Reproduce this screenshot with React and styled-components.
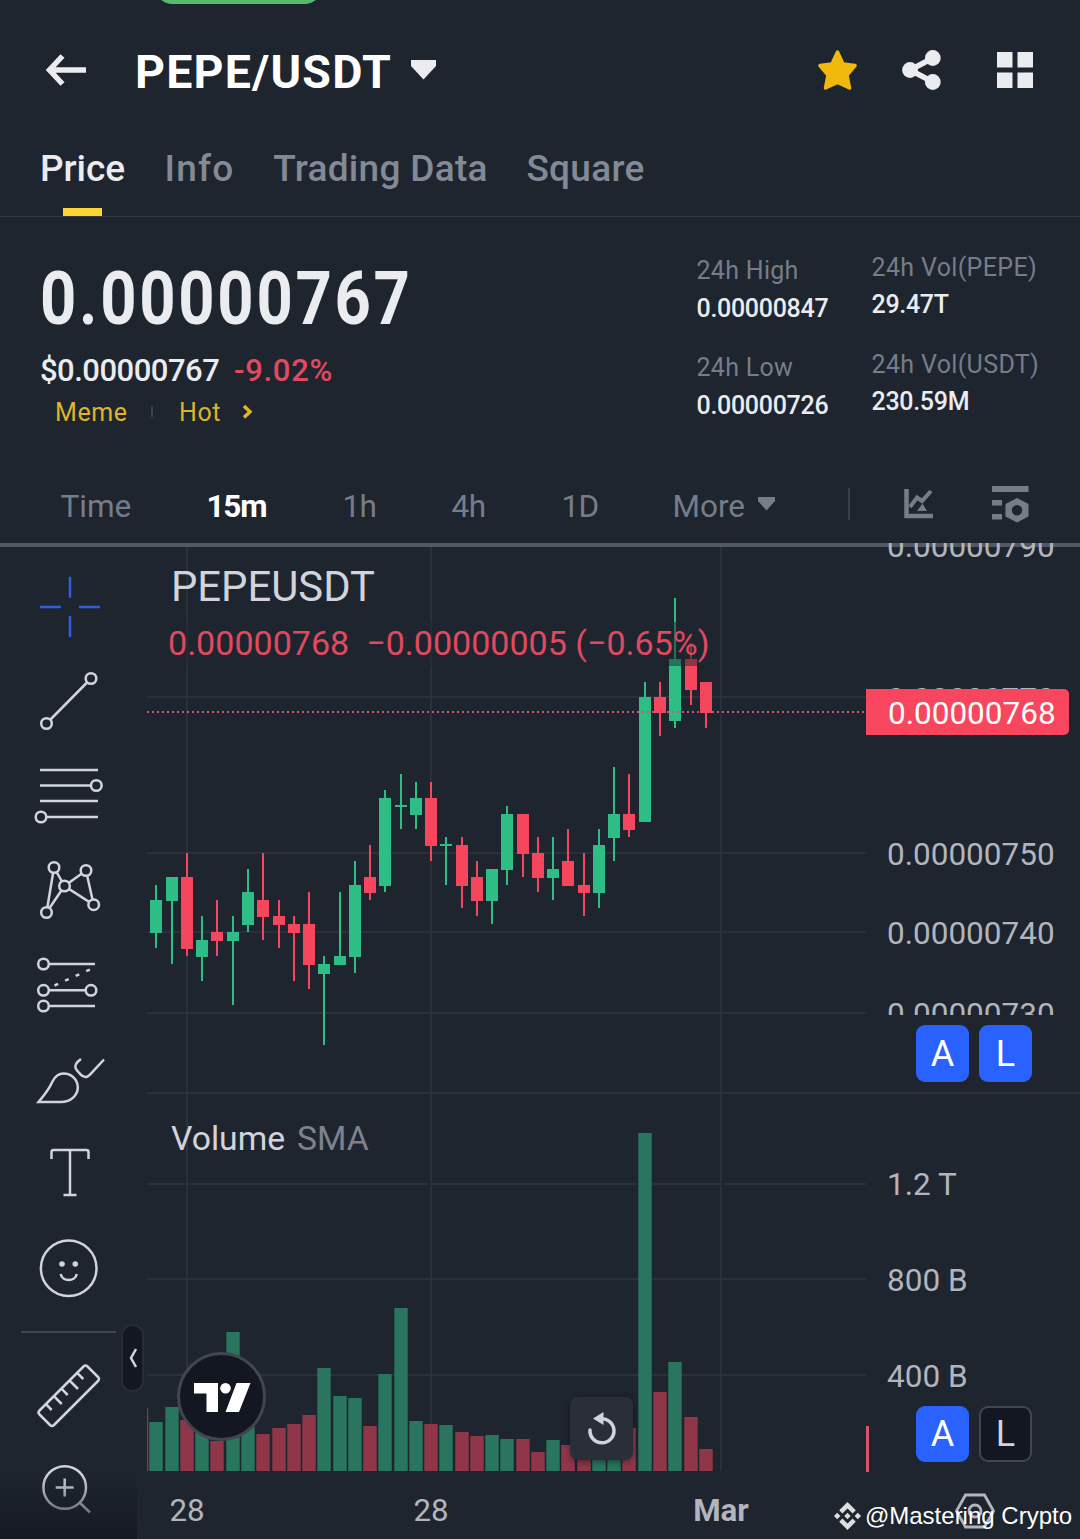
import React from 'react';
import styled, { createGlobalStyle } from 'styled-components';

const GlobalStyle = createGlobalStyle`
  * { box-sizing: border-box; }
  body {
    margin: 0;
    background: #1e252f;
    font-family: 'Roboto', 'Inter', sans-serif;
  }
  svg { display: block; flex: none; }
`;

const BG = '#1e252f';
const UP = '#2ebd85';
const DOWN = '#f6465d';

const Screen = styled.main`
  position: relative;
  width: 1080px;
  height: 1539px;
  overflow: hidden;
  background: ${BG};
  display: flex;
  flex-direction: column;
`;

// Bottom edge of the system call pill
const StatusPill = styled.div`
  position: absolute;
  top: -36px;
  left: 153px;
  width: 171px;
  height: 40px;
  border-radius: 20px;
  background: #57b96b;
`;

const Header = styled.header`
  height: 140px;
  padding: 0 47px 0 45px;
  display: flex;
  align-items: center;
`;

const Pair = styled.h1`
  margin: 3px 19px 0 48px;
  font-size: 46.5px;
  font-weight: 700;
  letter-spacing: ${({ $track }) => $track}px;
  line-height: 60px;
  color: #fff;
`;

const Actions = styled.div`
  margin-left: auto;
  display: flex;
  align-items: center;
`;

const Tabs = styled.nav`
  height: 77px;
  padding-left: 40.5px;
  display: flex;
  border-bottom: 1px solid #333843;
`;

const Tab = styled.div`
  width: ${({ $w }) => $w}px;
  margin-right: 40px;
  display: flex;
  flex-direction: column;
  align-items: center;
  justify-content: space-between;
  white-space: nowrap;
  font-size: 37px;
  font-weight: 500;
  line-height: 58px;
  letter-spacing: ${({ $track }) => $track}px;
  color: ${({ $active }) => ($active ? '#eaecef' : '#838a96')};
  &::after {
    content: '';
    width: 39px;
    height: 8px;
    background: ${({ $active }) => ($active ? '#fcd535' : 'transparent')};
  }
`;

const Ticker = styled.section`
  height: 243px;
  padding-left: 40px;
  display: flex;
`;

const PriceBlock = styled.div`
  width: 656.5px;
  padding-top: 43px;
`;

const LastPrice = styled.div`
  width: 500px;
  height: 76px;
  line-height: 76px;
  font-size: 75px;
  font-weight: 700;
  letter-spacing: 3.2px;
  color: #eaecef;
  transform: scaleX(0.845);
  transform-origin: left;
`;

const FiatRow = styled.div`
  margin-top: 15px;
  display: flex;
  gap: 14px;
  font-size: 31px;
  font-weight: 500;
  line-height: 40px;
  color: #eaecef;
`;

const Fiat = styled.span`
  width: 180px;
  letter-spacing: -0.5px;
`;

const Change = styled.span`
  color: #e0495f;
  letter-spacing: 0.7px;
`;

const TagRow = styled.div`
  margin-top: 3px;
  padding-left: 15px;
  display: flex;
  align-items: center;
  font-size: 25px;
  line-height: 38px;
  letter-spacing: 0.6px;
  color: #dfb32b;
`;

const Tag = styled.span`
  width: ${({ $w }) => $w}px;
`;

const TagRule = styled.span`
  width: 2px;
  height: 11px;
  margin: 0 26px 4px 24px;
  background: #3a404b;
`;

const StatColumn = styled.div`
  width: 175px;
  padding-top: ${({ $top }) => $top}px;
  display: flex;
  flex-direction: column;
  gap: 22px;
`;

const Stat = styled.div`
  display: flex;
  flex-direction: column;
  font-size: 25px;
  line-height: 37.5px;
  white-space: nowrap;
`;

const StatLabel = styled.span`
  color: #767d89;
  letter-spacing: ${({ $track }) => $track || 0}px;
`;

const StatValue = styled.span`
  font-weight: 500;
  color: #eaecef;
  letter-spacing: -0.3px;
`;

const Intervals = styled.div`
  height: 83px;
  padding: 7px 0 0 60.5px;
  display: grid;
  grid-template-columns: 146px 136px 109px 110px 111px 85px 90px 56px 88px 60px;
  align-items: center;
  font-size: 31.5px;
  line-height: 48px;
  color: #767d89;
`;

const Interval = styled.span`
  padding-top: 3px;
  font-weight: ${({ $active }) => ($active ? 700 : 400)};
  color: ${({ $active }) => ($active ? '#fff' : 'inherit')};
  letter-spacing: ${({ $track }) => $track || 0}px;
`;

const IntervalRule = styled.span`
  width: 2px;
  height: 32px;
  margin-bottom: 2px;
  background: #3a404b;
`;

const ChartArea = styled.section`
  position: relative;
  height: 996px;
  display: flex;
  box-shadow: inset 0 4px #525761;
`;

const Rail = styled.aside`
  position: relative;
  width: 147px;
  padding-top: 16.75px;
  &::after {
    content: '';
    position: absolute;
    left: 0;
    bottom: 0;
    width: 137px;
    height: 66px;
    background: linear-gradient(rgba(19, 23, 34, 0), rgba(19, 23, 34, 0.85));
  }
`;

const Tool = styled.div`
  height: 94.5px;
  padding-left: 30px;
  display: flex;
  align-items: center;
`;

const RailRule = styled.div`
  width: 95px;
  height: 2px;
  margin: 15px 0 16px 21px;
  background: #434651;
`;

const CollapseHandle = styled.button`
  position: absolute;
  left: 121px;
  top: 781px;
  width: 23px;
  height: 68px;
  padding: 0;
  display: flex;
  align-items: center;
  justify-content: center;
  border: 2px solid #272c37;
  border-radius: 11px;
  background: #131722;
`;

const Plot = styled.div`
  position: relative;
  width: 719px;
`;

const Legend = styled.div`
  position: absolute;
  left: 21px;
  top: 16px;
  display: flex;
  flex-direction: column;
  align-items: flex-start;
  white-space: nowrap;
`;

const LegendTitle = styled.div`
  margin-left: 3px;
  font-size: 41.8px;
  line-height: 56px;
  color: #d1d4dc;
`;

const LegendValues = styled.div`
  margin-top: 7px;
  height: 44px;
  display: flex;
  gap: 17px;
  font-size: 34.05px;
  line-height: 43px;
  color: #e0495f;
  background: rgba(30, 37, 47, 0.5);
`;

const VolumeLegend = styled.div`
  position: absolute;
  left: 24px;
  top: 576px;
  font-size: 33.7px;
  line-height: 40px;
  color: #d1d4dc;
  span {
    margin-left: 12px;
    color: #7e828d;
  }
`;

const TvBadge = styled.div`
  position: absolute;
  left: 30px;
  top: 809px;
  width: 89px;
  height: 89px;
  padding: 2px 0 0 2px;
  display: flex;
  align-items: center;
  justify-content: center;
  border: 3px solid #434651;
  border-radius: 50%;
  background: #131722;
`;

const ResetButton = styled.button`
  position: absolute;
  left: 423px;
  top: 854px;
  width: 63px;
  height: 63px;
  padding: 0;
  display: flex;
  align-items: center;
  justify-content: center;
  border: 0;
  border-radius: 8px;
  background: #2a2e39;
  box-shadow: 0 2px 6px rgba(0, 0, 0, 0.4);
`;

const Axis = styled.div`
  position: relative;
  width: 214px;
  display: flex;
  flex-direction: column;
`;

const ScaleButtons = styled.div`
  height: ${({ $h }) => $h}px;
  margin: ${({ $top }) => $top}px 0 0 50px;
  display: flex;
  gap: 10px;
`;

const ScaleButton = styled.button`
  width: 53px;
  padding: 0;
  border: ${({ $on }) => ($on ? '0' : '2px solid #434651')};
  border-radius: 9px;
  background: ${({ $on }) => ($on ? '#2962ff' : '#131722')};
  color: ${({ $on }) => ($on ? '#fff' : '#d1d4dc')};
  font-family: 'Roboto', sans-serif;
  font-size: 36px;
`;

const PriceTag = styled.div`
  position: absolute;
  left: 0;
  top: 146px;
  width: 203px;
  height: 46px;
  padding-left: 22px;
  border-radius: 0 5px 5px 0;
  background: #f7465d;
  color: #fff;
  font-size: 31.5px;
  line-height: 49px;
`;

const VolumeMark = styled.div`
  position: absolute;
  left: 0;
  top: 883px;
  width: 3px;
  height: 46px;
  background: #d9536a;
`;

const AxisSettings = styled.div`
  margin: 31px 0 0 89px;
`;

const Watermark = styled.div`
  position: absolute;
  right: 8px;
  bottom: 8px;
  display: flex;
  align-items: center;
  gap: 4px;
  font-family: 'Liberation Sans', Arial, sans-serif;
  font-size: 24px;
  line-height: 30px;
  color: #fff;
`;

const TimeLabel = styled.text`
  font-size: 31.3px;
  font-weight: ${({ $bold }) => ($bold ? 700 : 400)};
  fill: #b2b5be;
  text-anchor: middle;
`;

const AxisLabel = styled.text`
  font-size: 31.5px;
  fill: #b2b5be;
`;

// [body top, body bottom, high, low, volume top, rising]
const bars = [
  [900, 933, 885, 948, 1422, 1],
  [877, 901, 877, 964, 1407, 1],
  [877, 949, 853, 956, 1420, 0],
  [940, 957, 916, 981, 1430, 1],
  [932, 941, 900, 956, 1441, 0],
  [932, 941, 916, 1005, 1332, 1],
  [892, 925, 869, 932, 1427, 1],
  [900, 917, 853, 940, 1434, 0],
  [916, 925, 900, 948, 1428, 0],
  [924, 933, 916, 981, 1424, 0],
  [924, 965, 892, 989, 1415, 0],
  [964, 974, 956, 1045, 1368, 1],
  [956, 965, 892, 965, 1396, 1],
  [885, 957, 861, 973, 1398, 1],
  [877, 893, 845, 900, 1426, 0],
  [798, 886, 790, 892, 1374, 1],
  [805, 807, 774, 829, 1308, 1],
  [798, 815, 782, 829, 1421, 1],
  [798, 846, 782, 861, 1424, 0],
  [844, 846, 837, 885, 1425, 1],
  [845, 886, 837, 908, 1432, 0],
  [877, 901, 861, 916, 1436, 0],
  [869, 901, 869, 924, 1435, 1],
  [814, 870, 806, 885, 1439, 1],
  [814, 854, 814, 877, 1439, 0],
  [853, 878, 837, 892, 1452, 0],
  [869, 878, 837, 900, 1440, 1],
  [861, 886, 829, 886, 1445, 0],
  [885, 893, 853, 916, 1445, 0],
  [845, 893, 829, 908, 1442, 1],
  [814, 838, 767, 861, 1442, 1],
  [814, 830, 774, 837, 1428, 0],
  [697, 822, 682, 822, 1133, 1],
  [697, 713, 682, 736, 1392, 0],
  [659, 721, 598, 728, 1362, 1],
  [659, 690, 643, 705, 1417, 0],
  [682, 713, 682, 728, 1449, 0],
];

const barX = (i) => Math.round(156.42 + i * 15.26);

const Candles = () => (
  <svg width="719" height="996" viewBox="147 543 719 996">
    <g fill="#2b313b">
      {[187, 431, 721].map((x) => (
        <rect key={x} x={x - 1} y="547" width="2" height="924" />
      ))}
      {[697, 853, 932, 1013, 1093, 1184, 1279, 1375].map((y) => (
        <rect key={y} x="147" y={y - 1} width="719" height="2" />
      ))}
    </g>
    <rect x="147" y="1408" width="1.2" height="63" fill="#8f3749" />
    {bars.map(([, , , , top, up], i) => (
      <rect key={i} x={barX(i) - 6.7} y={top} width="13.4" height={1471 - top} fill={up ? '#29755d' : '#8f3749'} />
    ))}
    {bars.map(([top, bottom, high, low, , up], i) => (
      <g key={i} fill={up ? UP : DOWN}>
        <rect x={barX(i) - 1} y={high} width="2" height={low - high} />
        <rect x={barX(i) - 6} y={top} width="12" height={bottom - top} />
      </g>
    ))}
    <path d="M147 712H866" stroke="#d0566a" strokeWidth="2" strokeDasharray="2 3" />
    <TimeLabel x="187" y="1521">28</TimeLabel>
    <TimeLabel x="431" y="1521">28</TimeLabel>
    <TimeLabel x="721" y="1521" $bold>Mar</TimeLabel>
  </svg>
);

const PriceScale = () => (
  <svg width="214" height="472" viewBox="866 543 214 472">
    <AxisLabel x="887" y="557">0.00000790</AxisLabel>
    <AxisLabel x="887" y="710">0.00000770</AxisLabel>
    <AxisLabel x="887" y="865">0.00000750</AxisLabel>
    <AxisLabel x="887" y="944">0.00000740</AxisLabel>
    <AxisLabel x="887" y="1025">0.00000730</AxisLabel>
  </svg>
);

const VolumeScale = () => (
  <svg width="214" height="318" viewBox="866 1082 214 318">
    <path d="M866 1093H1080" stroke="#2b313b" strokeWidth="2" />
    <AxisLabel x="887" y="1195">1.2 T</AxisLabel>
    <AxisLabel x="887" y="1291">800 B</AxisLabel>
    <AxisLabel x="887" y="1387">400 B</AxisLabel>
  </svg>
);

const ToolIcon = ({ children, color = '#d1d4dc' }) => (
  <svg width="80" height="80" viewBox="0 0 80 80" fill="none" stroke={color} strokeWidth="2.5">
    {children}
  </svg>
);

const Dots = ({ at }) => at.map(([x, y]) => <circle key={`${x}-${y}`} cx={x} cy={y} r="5.3" fill={BG} />);

const tools = [
  <ToolIcon color="#2f5fdd"><path d="M40 9.7v21M40 49v21M10 40h21M49 40h21" /></ToolIcon>,
  <ToolIcon><path d="M61 16.5L16.5 61.5" /><Dots at={[[61, 16.5], [16.5, 61.5]]} /></ToolIcon>,
  <ToolIcon><path d="M10 14h58M10 29.5h56M10 45h58M11 61h57" /><Dots at={[[66.3, 29.5], [11, 61]]} /></ToolIcon>,
  <ToolIcon>
    <path d="M34.5 35L24 16.5L16.5 61.5L34.5 35L56 19.5L63.7 53.7Z" />
    <Dots at={[[24, 16.5], [56, 19.5], [34.5, 35], [16.5, 61.5], [63.7, 53.7]]} />
  </ToolIcon>,
  <ToolIcon>
    <path d="M14 19h51M14 45.3h46M14 61h51" />
    <path d="M24.5 40.5L61 24" strokeDasharray="4 7.6" />
    <Dots at={[[13.5, 19], [13.5, 45.3], [61, 45.3], [13.5, 61]]} />
  </ToolIcon>,
  <ToolIcon>
    <path d="M8.5 62H31C41 62 47.8 55 47.8 47.5C47.8 39 41 33.5 33.5 33.5C28 33.5 25 36.5 22.5 41.5C19 49.5 14.5 55 8.5 62Z" />
    <path d="M51 19L48 21.5C44.5 24.5 44.5 28 47.5 31L50.5 34.3C53.5 37.6 57 37.8 60 34.6L74 19.5" />
  </ToolIcon>,
  <ToolIcon><path d="M21.5 25V18Q21.5 16 23.5 16H56.5Q58.5 16 58.5 18V25M40 16V61M33.5 61H46.5" /></ToolIcon>,
  <ToolIcon>
    <circle cx="38.7" cy="39.3" r="27.8" />
    <path d="M30.7 45C32 53 45.5 53 46.7 45" />
    <g fill="#d1d4dc" stroke="none"><circle cx="32" cy="35" r="2.8" /><circle cx="45.3" cy="35" r="2.8" /></g>
  </ToolIcon>,
];

const ChevronIcon = () => (
  <svg width="10" height="19" viewBox="0 0 10 19" fill="none" stroke="#dfb32b" strokeWidth="3.4">
    <path d="M1 2l6 5.7-6 5.7" />
  </svg>
);

const TradingData = () => (
  <>
    <StatColumn $top={35}>
      <Stat><StatLabel $track={0.3}>24h High</StatLabel><StatValue>0.00000847</StatValue></Stat>
      <Stat><StatLabel $track={0.3}>24h Low</StatLabel><StatValue>0.00000726</StatValue></Stat>
    </StatColumn>
    <StatColumn $top={31.5}>
      <Stat><StatLabel $track={0.35}>24h Vol(PEPE)</StatLabel><StatValue>29.47T</StatValue></Stat>
      <Stat><StatLabel $track={0.35}>24h Vol(USDT)</StatLabel><StatValue>230.59M</StatValue></Stat>
    </StatColumn>
  </>
);

const App = () => (
  <>
    <GlobalStyle />
    <Screen>
      <StatusPill />
      <Header>
        <svg width="42" height="34" viewBox="0 0 42 34" fill="none" stroke="#eaecef" strokeWidth="5.5">
          <path d="M41 17H5M17.5 3L4.5 17L17.5 31" />
        </svg>
        <Pair $track={1.2}>PEPE/USDT</Pair>
        <svg width="25" height="20" viewBox="0 0 25 20"><path d="M0 0H25V6L12.5 19.5L0 6Z" fill="#eaecef" /></svg>
        <Actions>
          <svg width="39" height="40" viewBox="0 0 39 40">
            <path d="M19.5 2L25 14L37 15.5L29 25L31.5 38L19.5 32.5L7.5 38L10 25L2 15.5L14 14Z" fill="#f0b90b" stroke="#f0b90b" strokeWidth="3.5" strokeLinejoin="round" />
          </svg>
          <svg width="39" height="40" viewBox="0 0 39 40" style={{ marginLeft: 45 }}>
            <path d="M31 8L8 20L31 32" fill="none" stroke="#eaecef" strokeWidth="5.5" />
            <g fill="#eaecef"><circle cx="30.8" cy="8" r="7.9" /><circle cx="8" cy="20" r="7.9" /><circle cx="30.8" cy="32" r="7.9" /></g>
          </svg>
          <svg width="36" height="36" viewBox="0 0 36 36" style={{ marginLeft: 56 }}>
            <path d="M0 0H15.5V15.5H0ZM20.5 0H36V15.5H20.5ZM0 20.5H15.5V36H0ZM20.5 20.5H36V36H20.5Z" fill="#eaecef" />
          </svg>
        </Actions>
      </Header>
      <Tabs>
        <Tab $w={84} $active>Price</Tab>
        <Tab $w={70} $track={1.2}>Info</Tab>
        <Tab $w={212} $track={0.3}>Trading Data</Tab>
        <Tab $w={118} $track={0.3}>Square</Tab>
      </Tabs>
      <Ticker>
        <PriceBlock>
          <LastPrice>0.00000767</LastPrice>
          <FiatRow>
            <Fiat>$0.00000767</Fiat>
            <Change>-9.02%</Change>
          </FiatRow>
          <TagRow>
            <Tag $w={72}>Meme</Tag>
            <TagRule />
            <Tag $w={64}>Hot</Tag>
            <ChevronIcon />
          </TagRow>
        </PriceBlock>
        <TradingData />
      </Ticker>
      <Intervals>
        <Interval>Time</Interval>
        <Interval $active $track={-1.2}>15m</Interval>
        <Interval $track={-0.8}>1h</Interval>
        <Interval $track={-0.5}>4h</Interval>
        <Interval $track={-0.8}>1D</Interval>
        <Interval>More</Interval>
        <svg width="17" height="16" viewBox="0 0 17 16"><path d="M0 0H17V4L8.5 13.5L0 4Z" fill="#767d89" /></svg>
        <IntervalRule />
        <svg width="29" height="32" viewBox="0 0 29 32" fill="none" stroke="#767d89" strokeWidth="4.5">
          <path d="M2.5 0V27H29" />
          <path d="M6 18L13 8.5L18 12L27 2" strokeWidth="4" />
          <path d="M18.5 14.5L23 22H13Z" fill="#767d89" stroke="none" />
        </svg>
        <svg width="37" height="39" viewBox="0 0 37 39" fill="#767d89">
          <path d="M0 0H36.5V6H0ZM0 14H10V19.5H0ZM0 28H10V33.5H0Z" />
          <path fillRule="evenodd" d="M25 12L36.5 18V30.5L25 36.5L13.5 30.5V18ZM25 19A5.2 5.2 0 1 0 25 29.4A5.2 5.2 0 1 0 25 19Z" />
        </svg>
      </Intervals>
      <ChartArea>
        <Rail>
          {tools.map((icon, i) => <Tool key={i}>{icon}</Tool>)}
          <RailRule />
          <Tool>
            <ToolIcon>
              <path d="M53.5 10.5Q55.5 8.5 57.5 10.5L68 21Q70 23 68 25L24 69Q22 71 20 69L9.5 58.5Q7.5 56.5 9.5 54.5Z" />
              <path d="M47.6 17.3l5.7 5.7M40 25l8 8M31.9 33.2l5.8 5.8M24.4 40.7l7.3 7.3M16.4 48.7l5.3 5.3" />
            </ToolIcon>
          </Tool>
          <Tool>
            <ToolIcon>
              <circle cx="34.7" cy="36.5" r="21.3" />
              <path d="M34.7 27.5v18M25.7 36.5h18M49.5 51.5L60 61.5" />
            </ToolIcon>
          </Tool>
          <CollapseHandle>
            <svg width="8" height="20" viewBox="0 0 8 20" fill="none" stroke="#d1d4dc" strokeWidth="2.5"><path d="M7 1L2 10L7 19" /></svg>
          </CollapseHandle>
        </Rail>
        <Plot>
          <Candles />
          <Legend>
            <LegendTitle>PEPEUSDT</LegendTitle>
            <LegendValues>
              <span>0.00000768</span>
              <span>−0.00000005 (−0.65%)</span>
            </LegendValues>
          </Legend>
          <VolumeLegend>Volume<span>SMA</span></VolumeLegend>
          <TvBadge>
            <svg width="57" height="29" viewBox="0 0 57 29" fill="#fff">
              <path d="M0 0H24V29H12.5V10.5H0ZM42.5 0H56.5L45 29H31.5Z" />
              <circle cx="31.5" cy="5.3" r="5.3" />
            </svg>
          </TvBadge>
          <ResetButton>
            <svg width="30" height="34" viewBox="0 0 30 34" fill="none">
              <path d="M13 7A12 12 0 1 1 3 18" stroke="#d1d4dc" strokeWidth="3.5" strokeLinecap="round" />
              <path d="M16.5 0V13L6 6.5Z" fill="#d1d4dc" />
            </svg>
          </ResetButton>
        </Plot>
        <Axis>
          <PriceScale />
          <ScaleButtons $top={10} $h={57}>
            <ScaleButton $on>A</ScaleButton>
            <ScaleButton $on>L</ScaleButton>
          </ScaleButtons>
          <VolumeScale />
          <ScaleButtons $top={6} $h={56}>
            <ScaleButton $on>A</ScaleButton>
            <ScaleButton>L</ScaleButton>
          </ScaleButtons>
          <AxisSettings>
            <svg width="40" height="36" viewBox="0 0 40 36" fill="none" stroke="#b2b5be" strokeWidth="2.8">
              <path d="M10.5 2H29.5L38.5 18L29.5 34H10.5L1.5 18Z" />
              <circle cx="20" cy="18" r="6" />
            </svg>
          </AxisSettings>
          <PriceTag>0.00000768</PriceTag>
          <VolumeMark />
        </Axis>
      </ChartArea>
      <Watermark>
        <svg width="27" height="28" viewBox="0 0 27 28" fill="#dcdee0">
          <path d="M13.5 0L21.8 8.3L18.6 11.5L13.5 6.4L8.4 11.5L5.2 8.3ZM13.5 28L21.8 19.7L18.6 16.5L13.5 21.6L8.4 16.5L5.2 19.7ZM3.2 10.8L6.4 14L3.2 17.2L0 14ZM23.8 10.8L27 14L23.8 17.2L20.6 14ZM13.5 10.8L16.7 14L13.5 17.2L10.3 14Z" />
        </svg>
        @Mastering Crypto
      </Watermark>
    </Screen>
  </>
);

export default App;
